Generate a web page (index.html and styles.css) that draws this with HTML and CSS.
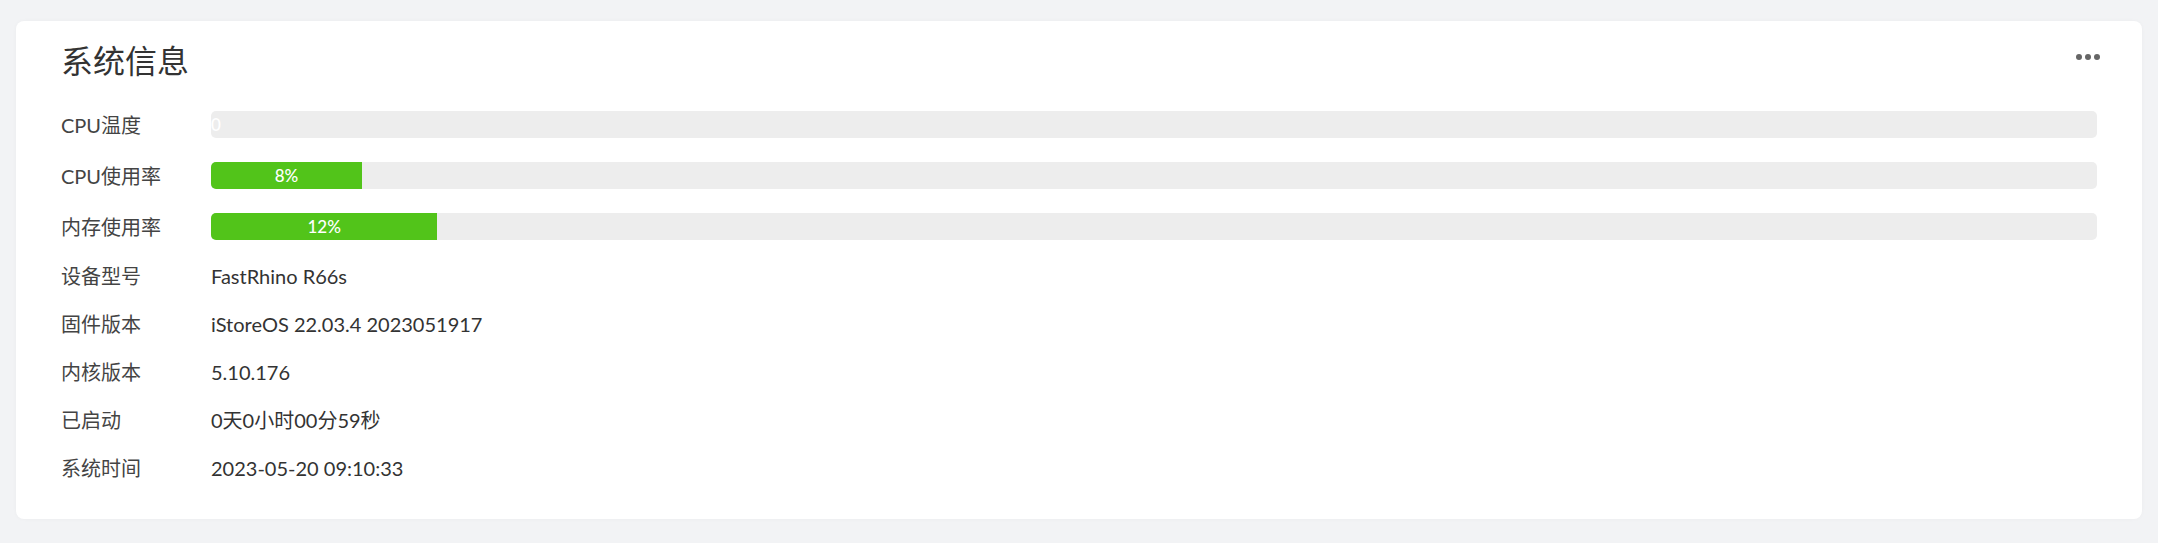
FILE: index.html
```html
<!DOCTYPE html>
<html lang="zh-CN">
<head>
<meta charset="utf-8">
<title>系统信息</title>
<link rel="stylesheet" href="styles.css">
</head>
<body>
<div class="card">
  <div class="card-header">
    <h2 class="title">系统信息</h2>
    <button class="more" aria-label="更多">
      <svg width="26" height="8" viewBox="0 0 26 8"><circle cx="4" cy="4" r="3" fill="#666"/><circle cx="13" cy="4" r="3" fill="#666"/><circle cx="22" cy="4" r="3" fill="#666"/></svg>
    </button>
  </div>
  <div class="rows">
    <div class="row bar-row">
      <div class="label">CPU温度</div>
      <div class="bar"><div class="fill empty" style="width:0%">0</div></div>
    </div>
    <div class="row bar-row">
      <div class="label">CPU使用率</div>
      <div class="bar"><div class="fill" style="width:8%">8%</div></div>
    </div>
    <div class="row bar-row">
      <div class="label">内存使用率</div>
      <div class="bar"><div class="fill" style="width:12%">12%</div></div>
    </div>
    <div class="row">
      <div class="label">设备型号</div>
      <div class="value">FastRhino R66s</div>
    </div>
    <div class="row">
      <div class="label">固件版本</div>
      <div class="value">iStoreOS 22.03.4 2023051917</div>
    </div>
    <div class="row">
      <div class="label">内核版本</div>
      <div class="value">5.10.176</div>
    </div>
    <div class="row">
      <div class="label">已启动</div>
      <div class="value">0天0小时00分59秒</div>
    </div>
    <div class="row">
      <div class="label">系统时间</div>
      <div class="value">2023-05-20 09:10:33</div>
    </div>
  </div>
</div>
</body>
</html>
```

FILE: styles.css
```css
* { box-sizing: border-box; }
html, body { margin: 0; }
body {
  background: #f2f3f5;
  padding: 21px 16px 24px;
  font-family: Lato, "Noto Sans CJK SC", sans-serif;
  color: #333;
}
.card {
  background: #fff;
  border-radius: 8px;
  padding: 16px 45px 39px;
  box-shadow: 0 0 4px rgba(0,0,0,0.03);
}
.card-header {
  display: flex;
  align-items: center;
  justify-content: space-between;
  height: 44px;
  margin-bottom: 30px;
}
.title {
  margin: 0;
  font-size: 32px;
  font-weight: 400;
  line-height: 44px;
  color: #333;
  font-family: "Noto Sans CJK SC", sans-serif;
}
.more {
  border: 0;
  background: none;
  padding: 0;
  margin-right: -4px;
  margin-top: -4px;
  display: flex;
  cursor: pointer;
}
.rows {
  display: flex;
  flex-direction: column;
  gap: 24px;
}
.row {
  display: flex;
  align-items: center;
  height: 24px;
  font-size: 20px;
  line-height: 24px;
}
.bar-row { height: 27px; }
.label {
  width: 150px;
  flex: none;
  color: #444;
}
.value {
  color: #333;
  font-size: 20px;
}
.bar {
  flex: 1;
  height: 27px;
  background: #ededed;
  border-radius: 5px;
  overflow: hidden;
  display: flex;
}
.fill {
  height: 100%;
  background: #52c41a;
  color: #fff;
  font-size: 17px;
  font-weight: 500;
  line-height: 27px;
  text-align: center;
  white-space: nowrap;
}
.fill.empty {
  background: transparent;
  text-align: left;
  overflow: visible;
}
```
